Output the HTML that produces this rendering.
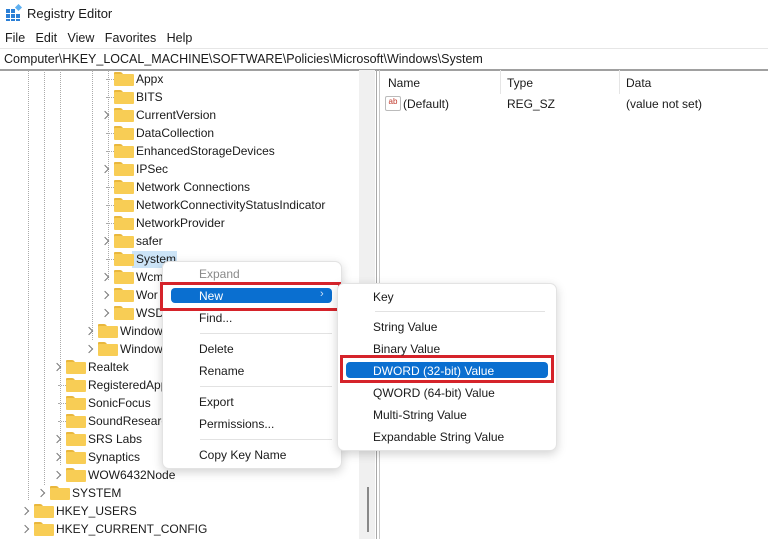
<!DOCTYPE html><html><head><style>
body{margin:0;width:768px;height:539px;overflow:hidden;background:#fff;font-family:"Liberation Sans",sans-serif;font-size:12px;color:#1a1a1a;position:relative}
.a{position:absolute;white-space:nowrap}
.f{position:absolute;width:20px;height:14px}
.f:before{content:"";position:absolute;left:0;top:0;width:9px;height:4px;background:#e9b73c;border-radius:1px 3px 0 0}
.f:after{content:"";position:absolute;left:0;top:2px;width:20px;height:12px;background:#f8cd55;border-radius:1px}
.c{position:absolute;width:5px;height:5px;border-right:1px solid #777;border-bottom:1px solid #777;transform:rotate(-45deg)}
.dv{position:absolute;border-left:1px dotted #aaa}
.dh{position:absolute;border-top:1px dotted #aaa;width:8px}
.m{position:absolute;background:#fff;border:1px solid #e3e3e3;border-radius:7px;box-shadow:0 3px 10px rgba(0,0,0,.18)}
.sep{position:absolute;height:1px;background:#e2e2e2}
.hl{position:absolute;background:#0a6fd0;border-radius:4px}
.rb{position:absolute;border:3px solid #d5232a;box-sizing:border-box}
</style></head><body>
<div class="a" style="left:0;top:0;width:768px;height:26px;background:#fff"></div>
<svg class="a" style="left:5px;top:4px" width="18" height="18"><g fill="#2b7fd6"><rect x="1" y="5" width="4" height="4"/><rect x="6" y="5" width="4" height="4"/><rect x="1" y="10" width="4" height="4"/><rect x="6" y="10" width="4" height="4"/><rect x="11" y="10" width="4" height="4"/><rect x="1" y="15" width="4" height="2"/><rect x="6" y="15" width="4" height="2"/><rect x="11" y="15" width="4" height="2"/></g><rect x="11" y="1" width="5" height="5" fill="#5fb0f0" transform="rotate(45 13.5 3.5)"/></svg>
<div class="a" style="left:27px;top:6px;font-size:13px">Registry Editor</div>
<div class="a" style="left:5px;top:31px;font-size:12.5px;word-spacing:0">File&nbsp;&nbsp;&nbsp;Edit&nbsp;&nbsp;&nbsp;View&nbsp;&nbsp;&nbsp;Favorites&nbsp;&nbsp;&nbsp;Help</div>
<div class="a" style="left:0;top:48px;width:768px;height:20px;border-top:1px solid #e6e6e6;border-bottom:2px solid #a0a0a0;background:#fff"></div>
<div class="a" style="left:4px;top:52px;font-size:12.5px">Computer\HKEY_LOCAL_MACHINE\SOFTWARE\Policies\Microsoft\Windows\System</div>
<div class="a" style="left:359px;top:70px;width:16px;height:469px;background:#f0f0f0"></div>
<div class="a" style="left:367px;top:487px;width:2px;height:45px;background:#888"></div>
<div class="a" style="left:376px;top:70px;width:1px;height:469px;background:#a8a8a8"></div>
<div class="a" style="left:379px;top:70px;width:1px;height:469px;background:#c8c8c8"></div>
<div class="dv" style="left:28px;top:70px;height:430px"></div>
<div class="dv" style="left:44px;top:70px;height:415px"></div>
<div class="dv" style="left:60px;top:70px;height:395px"></div>
<div class="dv" style="left:92px;top:70px;height:270px"></div>
<div class="dv" style="left:108px;top:70px;height:210px"></div>
<div class="a" style="left:388px;top:76px">Name</div><div class="a" style="left:507px;top:76px">Type</div><div class="a" style="left:626px;top:76px">Data</div>
<div class="a" style="left:500px;top:70px;width:1px;height:24px;background:#e5e5e5"></div>
<div class="a" style="left:619px;top:70px;width:1px;height:24px;background:#e5e5e5"></div>
<div class="a" style="left:385px;top:96px;width:14px;height:13px;border:1px solid #bbb;font-size:8px;color:#c0392b;text-align:center;line-height:10px;border-radius:2px">ab</div>
<div class="a" style="left:403px;top:97px">(Default)</div><div class="a" style="left:507px;top:97px">REG_SZ</div><div class="a" style="left:626px;top:97px">(value not set)</div>
<div class="a" style="left:132px;top:251px;width:45px;height:17px;background:#cce4f7"></div>
<div id="tree"></div>
<script>
var rows=[[4,"Appx",0],[4,"BITS",0],[4,"CurrentVersion",1],[4,"DataCollection",0],[4,"EnhancedStorageDevices",0],[4,"IPSec",1],[4,"Network Connections",0],[4,"NetworkConnectivityStatusIndicator",0],[4,"NetworkProvider",0],[4,"safer",1],[4,"System",0],[4,"Wcm",1],[4,"Wor",1],[4,"WSD",1],[3,"Window",1],[3,"Window",1],[2,"Realtek",1],[2,"RegisteredApp",0],[2,"SonicFocus",0],[2,"SoundResearc",0],[2,"SRS Labs",1],[2,"Synaptics",1],[2,"WOW6432Node",1],[1,"SYSTEM",1],[0,"HKEY_USERS",1],[0,"HKEY_CURRENT_CONFIG",1]];
var fx=[34,50,66,98,114],h="";
rows.forEach(function(r,i){var y=79+18*i,x=fx[r[0]];
h+='<div class="f" style="left:'+x+'px;top:'+(y-7)+'px"></div><div class="a" style="left:'+(x+22)+'px;top:'+(y-7)+'px">'+r[1]+'</div>';
if(r[2])h+='<div class="c" style="left:'+(x-12)+'px;top:'+(y-3)+'px"></div>';else h+='<div class="dh" style="left:'+(x-8)+'px;top:'+y+'px"></div>';});
document.getElementById("tree").innerHTML=h;
</script>
<div class="m" style="left:162px;top:261px;width:178px;height:206px"></div>
<div class="hl" style="left:171px;top:288px;width:161px;height:15px"></div>
<div class="rb" style="left:160px;top:282px;width:181px;height:29px"></div>
<div class="a" style="left:199px;top:267px;color:#8a8a8a">Expand</div>
<div class="a" style="left:199px;top:289px;color:#fff">New</div><div class="a" style="left:320px;top:288px;color:#cfe3f7;font-size:11px">›</div>
<div class="a" style="left:199px;top:311px">Find...</div>
<div class="sep" style="left:200px;top:333px;width:132px"></div>
<div class="a" style="left:199px;top:342px">Delete</div>
<div class="a" style="left:199px;top:364px">Rename</div>
<div class="sep" style="left:200px;top:386px;width:132px"></div>
<div class="a" style="left:199px;top:395px">Export</div>
<div class="a" style="left:199px;top:417px">Permissions...</div>
<div class="sep" style="left:200px;top:439px;width:132px"></div>
<div class="a" style="left:199px;top:448px">Copy Key Name</div>
<div class="m" style="left:337px;top:283px;width:218px;height:166px"></div>
<div class="hl" style="left:346px;top:362px;width:202px;height:16px"></div>
<div class="rb" style="left:340px;top:355px;width:214px;height:28px"></div>
<div class="a" style="left:373px;top:290px">Key</div>
<div class="sep" style="left:375px;top:311px;width:170px"></div>
<div class="a" style="left:373px;top:320px">String Value</div>
<div class="a" style="left:373px;top:342px">Binary Value</div>
<div class="a" style="left:373px;top:364px;color:#fff">DWORD (32-bit) Value</div>
<div class="a" style="left:373px;top:386px">QWORD (64-bit) Value</div>
<div class="a" style="left:373px;top:408px">Multi-String Value</div>
<div class="a" style="left:373px;top:430px">Expandable String Value</div>
</body></html>
